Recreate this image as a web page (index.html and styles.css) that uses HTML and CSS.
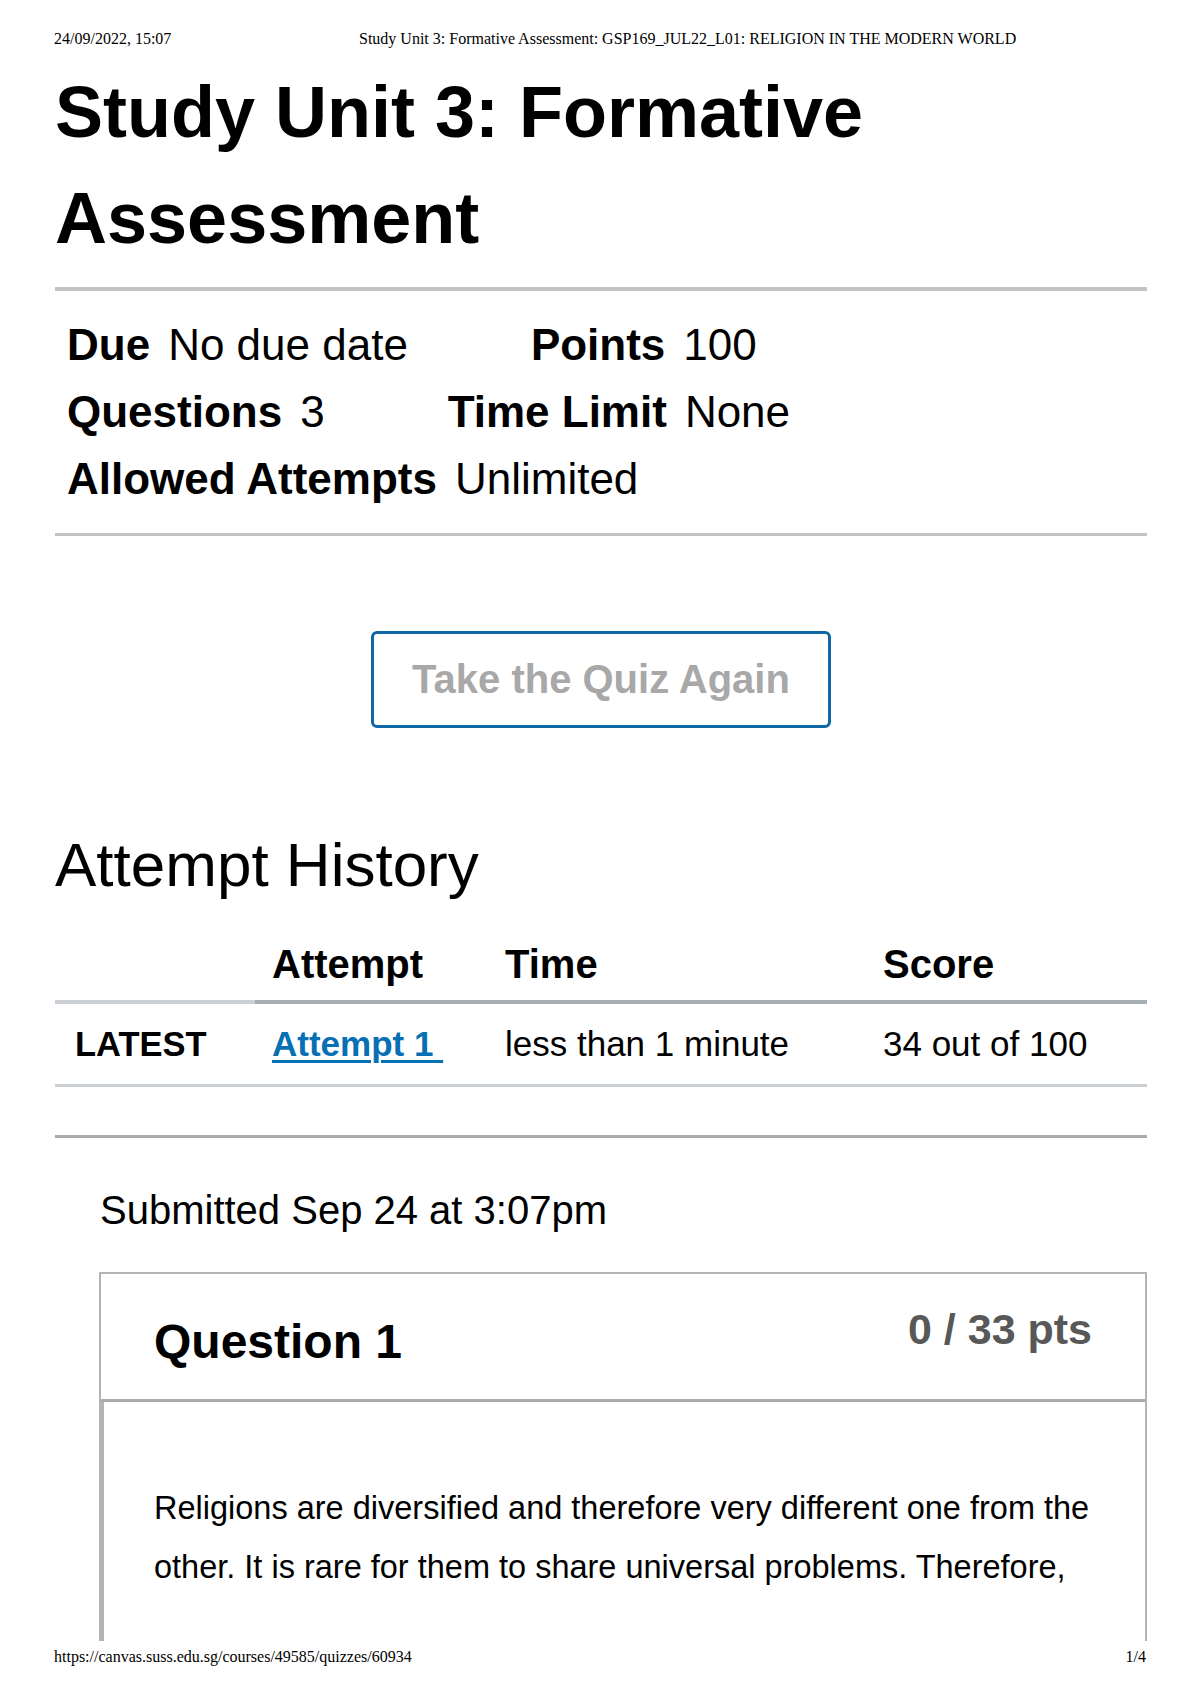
FILE: index.html
```html
<!DOCTYPE html>
<html lang="en">
<head>
<meta charset="utf-8">
<title>Study Unit 3: Formative Assessment</title>
<link rel="stylesheet" href="styles.css">
</head>
<body>
<header class="print-header">
  <span class="print-date">24/09/2022, 15:07</span>
  <span class="print-title">Study Unit 3: Formative Assessment: GSP169_JUL22_L01: RELIGION IN THE MODERN WORLD</span>
</header>
<main class="page">
  <h1 class="quiz-title">Study Unit 3: Formative Assessment</h1>
  <section class="details">
    <div class="details-row">
      <div class="detail"><span class="label">Due</span><span class="value">No due date</span></div>
      <div class="detail"><span class="label">Points</span><span class="value">100</span></div>
    </div>
    <div class="details-row">
      <div class="detail"><span class="label">Questions</span><span class="value">3</span></div>
      <div class="detail"><span class="label">Time Limit</span><span class="value">None</span></div>
    </div>
    <div class="details-row">
      <div class="detail"><span class="label">Allowed Attempts</span><span class="value">Unlimited</span></div>
    </div>
  </section>
  <div class="action">
    <a class="btn-retake" href="#">Take the Quiz Again</a>
  </div>
  <h2 class="history-title">Attempt History</h2>
  <table class="history">
    <colgroup>
      <col class="c1"><col class="c2"><col class="c3"><col class="c4">
    </colgroup>
    <thead>
      <tr>
        <th class="th-blank"></th>
        <th>Attempt</th>
        <th>Time</th>
        <th>Score</th>
      </tr>
    </thead>
    <tbody>
      <tr>
        <td class="latest">LATEST</td>
        <td><a class="attempt-link" href="#">Attempt 1&nbsp;</a></td>
        <td>less than 1 minute</td>
        <td>34 out of 100</td>
      </tr>
    </tbody>
  </table>
  <div class="submission">
    <p class="submitted">Submitted Sep 24 at 3:07pm</p>
    <div class="question">
      <div class="question-header">
        <h3 class="question-name">Question 1</h3>
        <span class="question-pts">0 / 33 pts</span>
      </div>
      <div class="question-body">
        <p class="question-text">Religions are diversified and therefore very different one from the other. It is rare for them to share universal problems. Therefore,</p>
      </div>
    </div>
  </div>
</main>
<footer class="print-footer">
  <span class="print-url">https://canvas.suss.edu.sg/courses/49585/quizzes/60934</span>
  <span class="print-page">1/4</span>
</footer>
</body>
</html>
```

FILE: styles.css
```css
html, body {
  margin: 0;
  padding: 0;
  background: #ffffff;
}

body {
  width: 1200px;
  font-family: "Liberation Sans", Arial, sans-serif;
  color: #000000;
}

.print-header {
  display: flex;
  height: 18px;
  padding: 30px 54px 0 54px;
  font-family: "Liberation Serif", "Times New Roman", serif;
  font-size: 16px;
  line-height: 18px;
  white-space: nowrap;
}

.print-date {
  width: 305px;
  flex-shrink: 0;
}

.page {
  height: 1593px;
  overflow: hidden;
  padding: 0 53px 0 55px;
}

.quiz-title {
  margin: 11px 0 0 0;
  font-size: 72px;
  line-height: 106px;
  font-weight: bold;
}

.details {
  margin-top: 16px;
  border-top: 4px solid #c3c3c3;
  border-bottom: 3px solid #c3c3c3;
  padding: 21px 0 20px 12px;
}

.details-row {
  display: flex;
  gap: 0 123px;
  height: 67px;
  font-size: 44px;
  line-height: 66px;
  white-space: nowrap;
}

.label {
  font-weight: bold;
  margin-right: 18px;
}

.action {
  display: flex;
  justify-content: center;
  margin-top: 95px;
}

.btn-retake {
  box-sizing: border-box;
  display: flex;
  align-items: center;
  justify-content: center;
  width: 460px;
  height: 97px;
  border: 3px solid #0f67a5;
  border-radius: 6px;
  color: #a8a8a8;
  font-size: 40px;
  font-weight: bold;
  text-decoration: none;
}

.history-title {
  margin: 102px 0 0 0;
  font-size: 62px;
  line-height: 69px;
  font-weight: normal;
}

.history {
  width: 100%;
  margin-top: 30px;
  border-collapse: collapse;
  table-layout: fixed;
}

.c1 { width: 200px; }
.c2 { width: 233px; }
.c3 { width: 378px; }

.history th {
  padding: 12px 0 13px 17px;
  text-align: left;
  font-size: 40px;
  line-height: 46px;
  font-weight: bold;
  border-bottom: 4px solid #a6aeb5;
}

.history th.th-blank {
  border-bottom-color: #cbd0d4;
}

.history td {
  padding: 20px 0 20px 17px;
  font-size: 35px;
  line-height: 40px;
  border-bottom: 3px solid #cbd0d4;
  white-space: nowrap;
}

.history td.latest {
  padding-left: 20px;
  font-weight: bold;
  font-size: 34.5px;
}

.attempt-link {
  color: #0770b5;
  font-weight: bold;
  text-decoration: underline;
  text-decoration-thickness: 3px;
  text-underline-offset: 4px;
}

.submission {
  margin-top: 48px;
  border-top: 3px solid #a9a9a9;
}

.submitted {
  margin: 49px 0 0 45px;
  font-size: 40px;
  line-height: 46px;
}

.question {
  margin: 39px 0 0 44px;
  border: 2px solid #b4b4b4;
  border-bottom: none;
}

.question-header {
  display: flex;
  justify-content: space-between;
  align-items: flex-start;
  padding: 31px 53px 30px 53px;
  border-bottom: 3px solid #ababab;
}

.question-name {
  margin: 9px 0 0 0;
  font-size: 48px;
  line-height: 55px;
  font-weight: bold;
}

.question-pts {
  font-size: 43px;
  line-height: 48px;
  font-weight: bold;
  color: #585858;
}

.question-body {
  min-height: 400px;
  padding: 77px 40px 0 50px;
  border-left: 3px solid #b4b4b4;
}

.question-text {
  margin: 0;
  font-size: 32.5px;
  line-height: 59px;
}

.print-footer {
  display: flex;
  justify-content: space-between;
  margin-top: 7px;
  padding: 0 54px 0 54px;
  font-family: "Liberation Serif", "Times New Roman", serif;
  font-size: 16px;
  line-height: 18px;
  white-space: nowrap;
}
```
